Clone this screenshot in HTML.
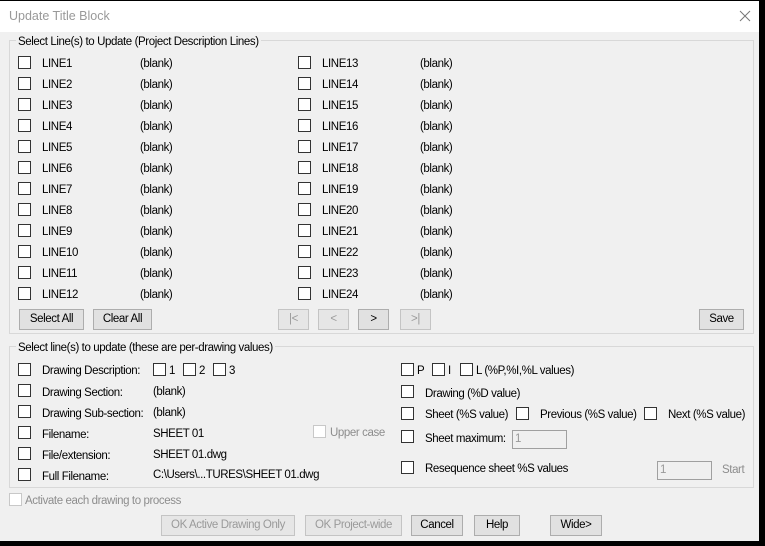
<!DOCTYPE html>
<html><head><style>
body{margin:0;width:765px;height:546px;background:#000;position:relative;overflow:hidden;font-family:"Liberation Sans",sans-serif;font-size:11.5px;color:#000}
.win{position:absolute;left:0;top:1px;width:759px;height:540px;background:#f0f0f0}
.title{position:absolute;left:0;top:0;width:759px;height:31px;background:#fff}
.title span{position:absolute;left:9px;top:8px;font-size:12.5px;color:#999}
.x{position:absolute;left:739px;top:9px}
.g{position:absolute;border:1px solid #d8d8d8}
.gl{position:absolute;background:#f0f0f0;padding:0 2px;line-height:13px}
.cb{position:absolute;width:11px;height:11px;border:1px solid #333;background:#fff}
.cbd{border-color:#c8c8c8}
.t{position:absolute;top:0;line-height:14px;white-space:nowrap;letter-spacing:-0.4px;margin-top:1px}
.dis{color:#8d8d8d}
.b{position:absolute;height:19px;border:1px solid #adadad;background:#e1e1e1;text-align:center;line-height:19px;letter-spacing:-0.4px}
.bd{color:#9a9a9a;background:#e6e6e6;border-color:#c4c4c4}
.tb{position:absolute;height:17px;border:1px solid #a0a0a0;background:#f0f0f0;color:#999;line-height:17px;padding-left:2px}
</style></head><body>
<div class="win">
<div class="title"><span>Update Title Block</span><svg class="x" width="12" height="12" viewBox="0 0 12 12"><path d="M1 1L11 11M11 1L1 11" stroke="#777" stroke-width="1" fill="none"/></svg></div>

<div class="g" style="left:9px;top:39px;width:743px;height:292px"></div>
<div class="gl t" style="left:16px;top:33px">Select Line(s) to Update (Project Description Lines)</div>

<div class="cb" style="left:18px;top:55px"></div><div class="t" style="left:42px;top:55px">LINE1</div><div class="t" style="left:140px;top:55px">(blank)</div>
<div class="cb" style="left:18px;top:76px"></div><div class="t" style="left:42px;top:76px">LINE2</div><div class="t" style="left:140px;top:76px">(blank)</div>
<div class="cb" style="left:18px;top:97px"></div><div class="t" style="left:42px;top:97px">LINE3</div><div class="t" style="left:140px;top:97px">(blank)</div>
<div class="cb" style="left:18px;top:118px"></div><div class="t" style="left:42px;top:118px">LINE4</div><div class="t" style="left:140px;top:118px">(blank)</div>
<div class="cb" style="left:18px;top:139px"></div><div class="t" style="left:42px;top:139px">LINE5</div><div class="t" style="left:140px;top:139px">(blank)</div>
<div class="cb" style="left:18px;top:160px"></div><div class="t" style="left:42px;top:160px">LINE6</div><div class="t" style="left:140px;top:160px">(blank)</div>
<div class="cb" style="left:18px;top:181px"></div><div class="t" style="left:42px;top:181px">LINE7</div><div class="t" style="left:140px;top:181px">(blank)</div>
<div class="cb" style="left:18px;top:202px"></div><div class="t" style="left:42px;top:202px">LINE8</div><div class="t" style="left:140px;top:202px">(blank)</div>
<div class="cb" style="left:18px;top:223px"></div><div class="t" style="left:42px;top:223px">LINE9</div><div class="t" style="left:140px;top:223px">(blank)</div>
<div class="cb" style="left:18px;top:244px"></div><div class="t" style="left:42px;top:244px">LINE10</div><div class="t" style="left:140px;top:244px">(blank)</div>
<div class="cb" style="left:18px;top:265px"></div><div class="t" style="left:42px;top:265px">LINE11</div><div class="t" style="left:140px;top:265px">(blank)</div>
<div class="cb" style="left:18px;top:286px"></div><div class="t" style="left:42px;top:286px">LINE12</div><div class="t" style="left:140px;top:286px">(blank)</div>

<div class="cb" style="left:298px;top:55px"></div><div class="t" style="left:322px;top:55px">LINE13</div><div class="t" style="left:420px;top:55px">(blank)</div>
<div class="cb" style="left:298px;top:76px"></div><div class="t" style="left:322px;top:76px">LINE14</div><div class="t" style="left:420px;top:76px">(blank)</div>
<div class="cb" style="left:298px;top:97px"></div><div class="t" style="left:322px;top:97px">LINE15</div><div class="t" style="left:420px;top:97px">(blank)</div>
<div class="cb" style="left:298px;top:118px"></div><div class="t" style="left:322px;top:118px">LINE16</div><div class="t" style="left:420px;top:118px">(blank)</div>
<div class="cb" style="left:298px;top:139px"></div><div class="t" style="left:322px;top:139px">LINE17</div><div class="t" style="left:420px;top:139px">(blank)</div>
<div class="cb" style="left:298px;top:160px"></div><div class="t" style="left:322px;top:160px">LINE18</div><div class="t" style="left:420px;top:160px">(blank)</div>
<div class="cb" style="left:298px;top:181px"></div><div class="t" style="left:322px;top:181px">LINE19</div><div class="t" style="left:420px;top:181px">(blank)</div>
<div class="cb" style="left:298px;top:202px"></div><div class="t" style="left:322px;top:202px">LINE20</div><div class="t" style="left:420px;top:202px">(blank)</div>
<div class="cb" style="left:298px;top:223px"></div><div class="t" style="left:322px;top:223px">LINE21</div><div class="t" style="left:420px;top:223px">(blank)</div>
<div class="cb" style="left:298px;top:244px"></div><div class="t" style="left:322px;top:244px">LINE22</div><div class="t" style="left:420px;top:244px">(blank)</div>
<div class="cb" style="left:298px;top:265px"></div><div class="t" style="left:322px;top:265px">LINE23</div><div class="t" style="left:420px;top:265px">(blank)</div>
<div class="cb" style="left:298px;top:286px"></div><div class="t" style="left:322px;top:286px">LINE24</div><div class="t" style="left:420px;top:286px">(blank)</div>

<div class="b" style="left:19px;top:308px;width:63px">Select All</div>
<div class="b" style="left:93px;top:308px;width:57px">Clear All</div>
<div class="b bd" style="left:278px;top:308px;width:29px">|&lt;</div>
<div class="b bd" style="left:318px;top:308px;width:29px">&lt;</div>
<div class="b" style="left:358px;top:308px;width:29px">&gt;</div>
<div class="b bd" style="left:400px;top:308px;width:29px">&gt;|</div>
<div class="b" style="left:699px;top:308px;width:43px">Save</div>

<div class="g" style="left:9px;top:345px;width:743px;height:140px"></div>
<div class="gl t" style="left:16px;top:339px">Select line(s) to update (these are per-drawing values)</div>

<div class="cb" style="left:18px;top:362px"></div><div class="t" style="left:42px;top:362px">Drawing Description:</div>
<div class="cb" style="left:153px;top:362px"></div><div class="t" style="left:169px;top:362px">1</div>
<div class="cb" style="left:183px;top:362px"></div><div class="t" style="left:199px;top:362px">2</div>
<div class="cb" style="left:213px;top:362px"></div><div class="t" style="left:229px;top:362px">3</div>
<div class="cb" style="left:18px;top:383px"></div><div class="t" style="left:42px;top:384px">Drawing Section:</div><div class="t" style="left:153px;top:383px">(blank)</div>
<div class="cb" style="left:18px;top:404px"></div><div class="t" style="left:42px;top:405px">Drawing Sub-section:</div><div class="t" style="left:153px;top:404px">(blank)</div>
<div class="cb" style="left:18px;top:425px"></div><div class="t" style="left:42px;top:426px">Filename:</div><div class="t" style="left:153px;top:425px">SHEET 01</div>
<div class="cb cbd" style="left:313px;top:424px"></div><div class="t dis" style="left:330px;top:424px">Upper case</div>
<div class="cb" style="left:18px;top:446px"></div><div class="t" style="left:42px;top:447px">File/extension:</div><div class="t" style="left:153px;top:446px">SHEET 01.dwg</div>
<div class="cb" style="left:18px;top:467px"></div><div class="t" style="left:42px;top:468px">Full Filename:</div><div class="t" style="left:153px;top:466px">C:\Users\...TURES\SHEET 01.dwg</div>

<div class="cb" style="left:401px;top:362px"></div><div class="t" style="left:417px;top:362px">P</div>
<div class="cb" style="left:432px;top:362px"></div><div class="t" style="left:448px;top:362px">I</div>
<div class="cb" style="left:460px;top:362px"></div><div class="t" style="left:476px;top:362px">L (%P,%I,%L values)</div>
<div class="cb" style="left:401px;top:384px"></div><div class="t" style="left:425px;top:385px">Drawing (%D value)</div>
<div class="cb" style="left:401px;top:406px"></div><div class="t" style="left:425px;top:406px">Sheet (%S value)</div>
<div class="cb" style="left:516px;top:406px"></div><div class="t" style="left:540px;top:406px">Previous (%S value)</div>
<div class="cb" style="left:644px;top:406px"></div><div class="t" style="left:668px;top:406px">Next (%S value)</div>
<div class="cb" style="left:401px;top:429px"></div><div class="t" style="left:425px;top:430px">Sheet maximum:</div>
<div class="tb" style="left:512px;top:429px;width:51px">1</div>
<div class="cb" style="left:401px;top:460px"></div><div class="t" style="left:425px;top:460px">Resequence sheet %S values</div>
<div class="tb" style="left:657px;top:460px;width:51px">1</div>
<div class="t dis" style="left:722px;top:461px">Start</div>

<div class="cb cbd" style="left:9px;top:492px"></div><div class="t dis" style="left:25px;top:492px">Activate each drawing to process</div>

<div class="b bd" style="left:161px;top:514px;width:132px">OK Active Drawing Only</div>
<div class="b bd" style="left:305px;top:514px;width:95px">OK Project-wide</div>
<div class="b" style="left:411px;top:514px;width:50px">Cancel</div>
<div class="b" style="left:474px;top:514px;width:44px">Help</div>
<div class="b" style="left:550px;top:514px;width:50px">Wide&gt;</div>
</div>
</body></html>
